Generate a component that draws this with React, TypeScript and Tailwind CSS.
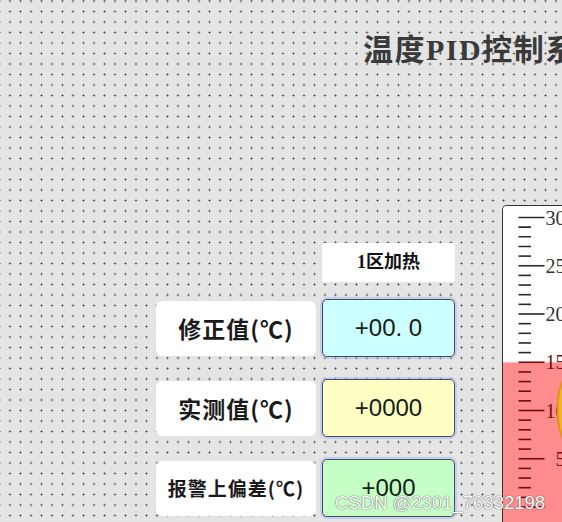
import React from 'react';

/* ------------------------------------------------------------- */
/* Data                                                          */
/* ------------------------------------------------------------- */
const rows = [
  { label: '修正值(℃)', value: '+00. 0', bg: 'bg-[#ccffff]', size: 'text-[23px]' },
  { label: '实测值(℃)', value: '+0000', bg: 'bg-[#ffffc4]', size: 'text-[23px]' },
  { label: '报警上偏差(℃)', value: '+000', bg: 'bg-[#c6ffc6]', size: 'text-[19px]' },
];

const marks = Array.from({ length: 31 }, (_, i) => 30 - i);
const tickY = (v: number) => 11.5 + (30 - v) * 9.65;

/* ------------------------------------------------------------- */
/* Thermometer face                                              */
/* ------------------------------------------------------------- */
function Thermometer() {
  const redTop = 156.5;
  return (
    <div className="h-[330px] w-[140px] shrink-0 overflow-hidden rounded-tl-[5px] border-l-[1.5px] border-t-[1.5px] border-[#333]">
      <svg width="140" height="330" viewBox="0 0 140 330">
        <rect x="0" y="0" width="140" height={redTop} fill="#ffffff" />
        <rect x="0" y={redTop} width="140" height={330 - redTop} fill="#ff8c8c" />
        {marks.map((v) => {
          const y = tickY(v);
          const major = v % 5 === 0;
          const inRed = y >= redTop - 0.5;
          const c = inRed ? '#6e1010' : '#2a2a2a';
          return (
            <g key={v}>
              <line
                x1="15.5"
                x2={major ? 41.5 : 28}
                y1={y}
                y2={y}
                stroke={c}
                strokeWidth="1.6"
              />
              {major && v > 0 && (
                <text
                  x="62.5"
                  y={y + 7}
                  textAnchor="end"
                  fontSize="20"
                  fontFamily='"Liberation Serif", serif'
                  fill={inRed ? '#6e1010' : '#333'}
                >
                  {v}
                </text>
              )}
            </g>
          );
        })}
        <defs>
          <radialGradient id="bulb" cx="0.6" cy="0.5" r="0.6">
            <stop offset="0%" stopColor="#ffe27a" />
            <stop offset="100%" stopColor="#f2b020" />
          </radialGradient>
        </defs>
        <ellipse cx="84.5" cy="203.5" rx="30" ry="52" fill="url(#bulb)" stroke="#d99010" strokeWidth="1.5" />
      </svg>
    </div>
  );
}

/* ------------------------------------------------------------- */
/* Page                                                          */
/* ------------------------------------------------------------- */
export default function App() {
  return (
    <div className="relative h-[522px] w-[562px] overflow-hidden bg-[#e4e4e4] bg-[radial-gradient(circle,#4a4a4a_0.7px,transparent_1.3px)] bg-[length:10.5px_10.5px] bg-[position:4.75px_-4.25px]">
      <h1 className="whitespace-nowrap pl-[363px] pt-[33px] font-['Liberation_Serif','Noto_Sans_CJK_SC',serif] text-[30px] font-bold leading-[34px] tracking-[1.5px] text-[#3a3a3a]">
        温度PID控制系统
      </h1>

      <div className="mt-[138px] flex items-start">
        {/* left panel */}
        <div className="ml-[156px] mt-[38px] flex flex-col">
          <div className="flex gap-[6px]">
            <div className="w-[160px]" />
            <div className="flex h-[39px] w-[133px] items-center justify-center rounded-[3px] bg-white font-['Liberation_Serif','Noto_Sans_CJK_SC',serif] text-[18px] font-bold text-[#111]">
              1区加热
            </div>
          </div>

          <div className="mt-[17px] flex flex-col gap-[22px]">
            {rows.map((r) => (
              <div key={r.label} className="flex items-center gap-[6px]">
                <div
                  className={`flex h-[55px] w-[160px] items-center justify-center rounded-[6px] bg-white font-['Noto_Sans_CJK_SC',sans-serif] font-semibold tracking-[1px] text-[#1a1a1a] ${r.size}`}
                >
                  {r.label}
                </div>
                <div
                  className={`flex h-[58px] w-[133px] items-center justify-center rounded-[5px] border-[1.5px] border-[#3c4a7c] font-['Liberation_Sans',sans-serif] text-[24px] text-[#142014] shadow-[0_0_0_2px_rgba(170,180,230,0.45)] ${r.bg}`}
                >
                  {r.value}
                </div>
              </div>
            ))}
          </div>
        </div>

        {/* scale */}
        <div className="ml-[47px]">
          <Thermometer />
        </div>
      </div>

      {/* watermark */}
      <div className="absolute left-[335px] top-[489px] whitespace-nowrap font-['Liberation_Sans',sans-serif] text-[18.5px] text-white [text-shadow:0_0_1px_#555,0_0_1px_#555]">
        CSDN @2301_76332198
      </div>
    </div>
  );
}
